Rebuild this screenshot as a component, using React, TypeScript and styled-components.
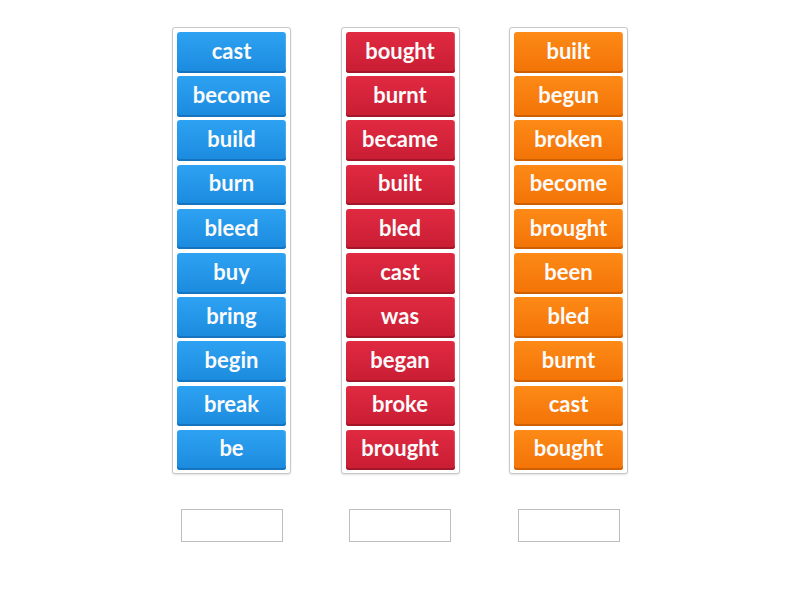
import React from "react";
import styled, { createGlobalStyle } from "styled-components";

const Global = createGlobalStyle`
  html, body { margin: 0; padding: 0; background: #ffffff; }
  body { width: 800px; height: 600px; overflow: hidden; font-family: Lato, "Open Sans", sans-serif; }
`;

type Tone = "blue" | "red" | "orange";

const palette: Record<Tone, { top: string; bottom: string; edge: string }> = {
  blue: { top: "#2ea2f2", bottom: "#1b8ade", edge: "#1673bd" },
  red: { top: "#e02a42", bottom: "#c81d33", edge: "#a3162a" },
  orange: { top: "#fd8a17", bottom: "#f37306", edge: "#cf5f03" },
};

const Page = styled.div`
  display: flex;
  justify-content: center;
  gap: 49.5px;
  padding: 27px 0 0 0;
`;

const Column = styled.div`
  display: flex;
  flex-direction: column;
  align-items: center;
  gap: 35px;
`;

const Stack = styled.div`
  width: 109px;
  padding: 4px 4px 3px 4px;
  border: 1px solid #c8c8c8;
  border-radius: 3px;
  box-shadow: 0 1px 2px rgba(0, 0, 0, 0.12);
  display: flex;
  flex-direction: column;
  gap: 3.6px;
  background: #fff;
`;

const Tile = styled.div<{ $tone: Tone }>`
  height: 40.6px;
  box-sizing: border-box;
  border-radius: 3px;
  background: linear-gradient(
    to bottom,
    ${(p) => palette[p.$tone].top},
    ${(p) => palette[p.$tone].bottom}
  );
  box-shadow: inset 0 -2px 0 ${(p) => palette[p.$tone].edge},
    inset -1px 0 0 rgba(255, 255, 255, 0.18);
  color: #fbfbfb;
  font-family: Lato, "Open Sans", sans-serif;
  font-weight: 700;
  font-size: 22px;
  display: flex;
  align-items: center;
  justify-content: center;
  padding-bottom: 4px;
`;

const Slot = styled.div`
  width: 100px;
  height: 31px;
  border: 1px solid #bdbdbd;
  background: #fff;
`;

const columns: { tone: Tone; words: string[] }[] = [
  {
    tone: "blue",
    words: ["cast", "become", "build", "burn", "bleed", "buy", "bring", "begin", "break", "be"],
  },
  {
    tone: "red",
    words: ["bought", "burnt", "became", "built", "bled", "cast", "was", "began", "broke", "brought"],
  },
  {
    tone: "orange",
    words: ["built", "begun", "broken", "become", "brought", "been", "bled", "burnt", "cast", "bought"],
  },
];

export default function App() {
  return (
    <>
      <Global />
      <Page>
        {columns.map((c, i) => (
          <Column key={i}>
            <Stack>
              {c.words.map((w, j) => (
                <Tile key={j} $tone={c.tone}>
                  {w}
                </Tile>
              ))}
            </Stack>
            <Slot />
          </Column>
        ))}
      </Page>
    </>
  );
}
